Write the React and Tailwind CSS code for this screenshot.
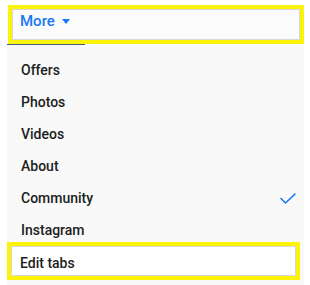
import React from "react";

const items = ["Offers", "Photos", "Videos", "About", "Community", "Instagram"];

export default function App() {
  return (
    <div
      className="w-[310px] h-[285px] bg-white overflow-hidden"
      style={{ fontFamily: "Roboto, 'Liberation Sans', sans-serif" }}
    >
      <div className="pt-[5px] pl-[8px]">
        <div className="w-[296px] h-[39px] border-4 border-[#fbf40a]">
          <div className="h-full border border-[#d6d6d6] bg-[#fbfbfb] pl-[7px] pt-[2px] flex items-start">
            <span className="text-[15px] leading-[18px] font-medium text-[#1877f2]">More</span>
            <svg width="8" height="6" viewBox="0 0 8 6" className="ml-[7px] mt-[7px]">
              <path d="M0 0 L8 0 L4 5 Z" fill="#1877f2" />
            </svg>
          </div>
        </div>
      </div>
      <div className="ml-[7px] w-[78px] h-[1px] bg-[#3d5a78]" />
      <div className="ml-[7px] w-[297px] bg-[#f9f9fa] h-[240px] pt-[5px]">
        {items.map((t) => (
          <div key={t} className="h-[32px] pl-[14px] pr-[8px] pt-[12px] flex items-start justify-between">
            <span className="text-[14px] leading-[16px] font-medium text-[#1c1e21]">{t}</span>
            {t === "Community" && (
              <svg width="16" height="11" viewBox="0 0 16 11" className="mt-[3px]">
                <path d="M1 5.5 L5.5 10 L15 1" fill="none" stroke="#1877f2" strokeWidth="1.6" strokeLinecap="round" strokeLinejoin="round" />
              </svg>
            )}
          </div>
        ))}
        <div className="w-[293px] h-[38px] border-4 border-[#fbf40a]">
          <div className="h-full border border-[#d6d6d6] bg-white pl-[8px] pt-[4px]">
            <span className="text-[14px] leading-[16px] font-medium text-[#1c1e21]">Edit tabs</span>
          </div>
        </div>
      </div>
    </div>
  );
}
